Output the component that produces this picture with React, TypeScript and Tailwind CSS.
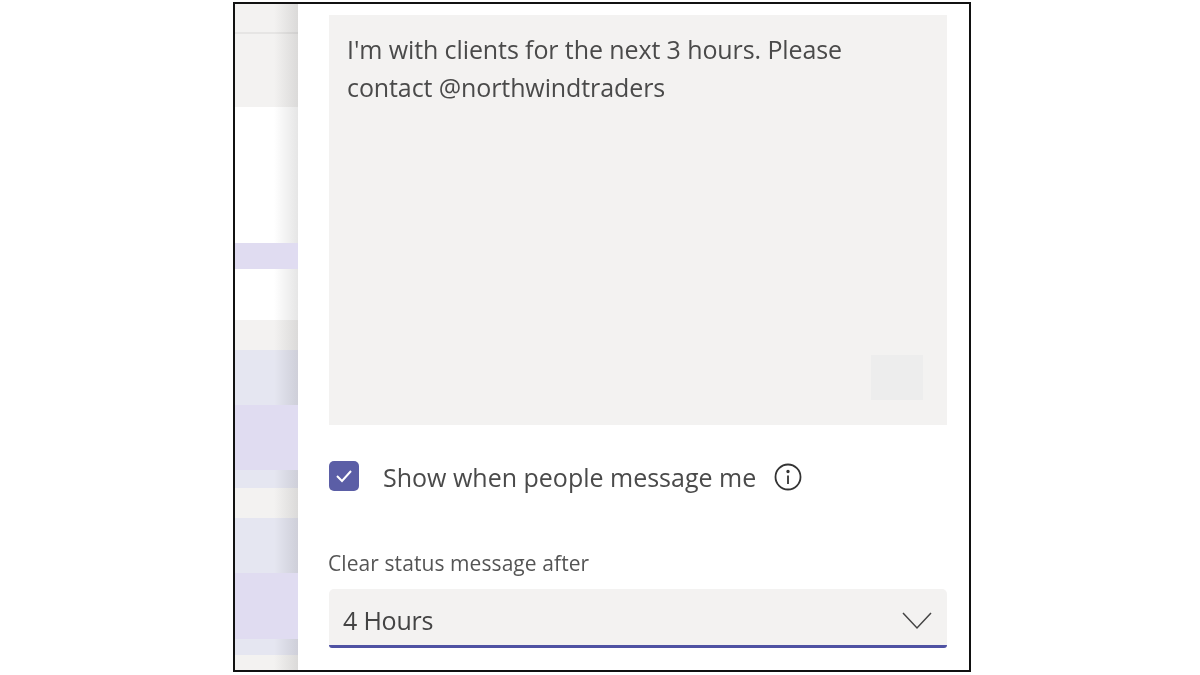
const stripes = [
  { h: 'h-[28px]', bg: 'bg-[#f3f2f1]' },
  { h: 'h-[2px]', bg: 'bg-[#e6e5e4]' },
  { h: 'h-[73px]', bg: 'bg-[#f3f2f1]' },
  { h: 'h-[136px]', bg: 'bg-white' },
  { h: 'h-[26px]', bg: 'relative z-10 bg-[#e0dcf1]' },
  { h: 'h-[51px]', bg: 'bg-white' },
  { h: 'h-[30px]', bg: 'bg-[#f3f2f1]' },
  { h: 'h-[55px]', bg: 'bg-[#e5e6f1]' },
  { h: 'h-[65px]', bg: 'relative z-10 bg-[#e0dcf1]' },
  { h: 'h-[18px]', bg: 'bg-[#e5e6f1]' },
  { h: 'h-[30px]', bg: 'bg-[#f3f2f1]' },
  { h: 'h-[55px]', bg: 'bg-[#e5e6f1]' },
  { h: 'h-[66px]', bg: 'relative z-10 bg-[#e0dcf1]' },
  { h: 'h-[16px]', bg: 'bg-[#e5e6f1]' },
  { h: 'h-[15px]', bg: 'bg-[#f3f2f1]' },
]

export default function App() {
  return (
    <div className="w-[1200px] h-[675px] bg-white pt-[2px] pl-[233px] overflow-hidden font-['Open_Sans',sans-serif]">
      <div className="flex w-[738px] h-[670px] border-2 border-[#111]">
        <div className="relative flex flex-col w-[63px] overflow-hidden">
          {stripes.map((s, i) => (
            <div key={i} className={`${s.h} ${s.bg} shrink-0`} />
          ))}
          <div className="absolute inset-y-0 right-0 w-[24px] bg-gradient-to-r from-transparent to-black/10" />
        </div>

        <div className="flex-1 flex flex-col bg-white pl-[31px] pr-[22px] pt-[11px] blur-[0.5px]">
          <div className="relative h-[410px] bg-[#f3f2f1] pl-[18px] pr-[60px] pt-[15px]">
            <p className="text-[25px] leading-[38px] tracking-[-0.1px] text-[#4a4a4a]">
              I'm with clients for the next 3 hours. Please contact @northwindtraders
            </p>
            <div className="absolute right-[24px] bottom-[25px] w-[52px] h-[45px] bg-[#ededed]" />
          </div>

          <div className="flex items-center mt-[36px] h-[30px]">
            <div className="flex items-center justify-center w-[30px] h-[30px] rounded-[5px] bg-[#5b5ea6]">
              <svg width="18" height="14" viewBox="0 0 18 14" fill="none" stroke="white" strokeWidth="2">
                <path d="M2 7l5 5L16 2" />
              </svg>
            </div>
            <span className="ml-[24px] pt-[3px] text-[25px] text-[#4a4a4a]">Show when people message me</span>
            <svg className="ml-[18px] mt-[2px]" width="28" height="28" viewBox="0 0 28 28" fill="none" stroke="#333" strokeWidth="1.8">
              <circle cx="14" cy="14" r="12.5" />
              <path d="M14 12.5V21" />
              <circle cx="14" cy="8.5" r="0.8" fill="#333" />
            </svg>
          </div>

          <label className="mt-[59px] -ml-[1px] text-[21px] leading-[26px] tracking-[0.08px] text-[#555]">Clear status message after</label>

          <div className="flex items-center justify-between h-[59px] mt-[13px] pl-[14px] pr-[15px] pt-[7px] bg-[#f3f2f1] rounded-t-[5px] rounded-b-[3px] border-b-[3px] border-[#4f52a3]">
            <span className="text-[25px] tracking-[-0.2px] text-[#444]">4 Hours</span>
            <svg width="30" height="18" viewBox="0 0 30 18" fill="none" stroke="#444" strokeWidth="1.5">
              <path d="M1 1l14 15L29 1" />
            </svg>
          </div>
        </div>
      </div>
    </div>
  )
}
